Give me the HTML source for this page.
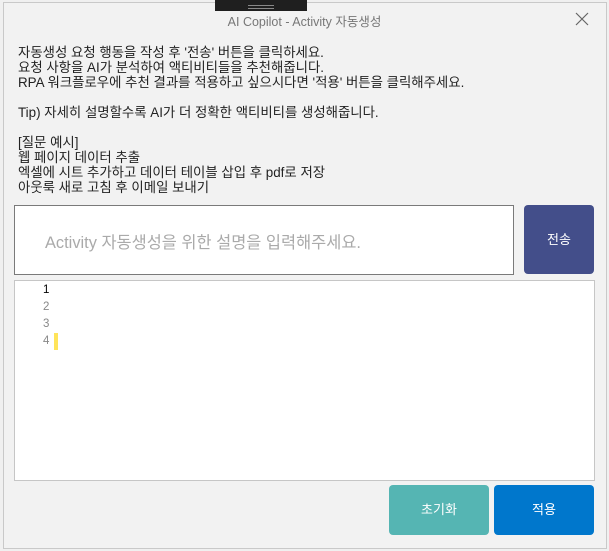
<!DOCTYPE html>
<html><head><meta charset="utf-8"><style>
body{margin:0;width:609px;height:551px;background:#f0f0f0;position:relative;overflow:hidden;font-family:"Liberation Sans","Noto Sans CJK KR",sans-serif;}
.win{position:absolute;left:3px;top:2px;width:602px;height:545px;border:1px solid #c9c9c9;background:#f2f2f2;}
.tab{position:absolute;left:215px;top:0;width:92px;height:11px;background:#1f1f1f;}
.tab i{position:absolute;left:33px;width:26px;height:1px;background:#888;}
.title{position:absolute;left:0;width:609px;top:11px;text-align:center;font-size:12.5px;color:#777;}
.close{position:absolute;left:574px;top:11px;}
.txt{position:absolute;left:18px;top:45px;font-size:13.4px;line-height:15px;color:#222;white-space:pre;}
.inp{position:absolute;left:14px;top:205px;width:498px;height:68px;border:1px solid #7a7a7a;background:#fff;}
.inp span{position:absolute;left:30px;top:23px;font-size:16.4px;color:#aaa;}
.send{position:absolute;left:524px;top:205px;width:70px;height:69px;background:#434e8a;border-radius:4px;color:#fff;font-size:13px;text-align:center;line-height:69px;}
.code{position:absolute;left:14px;top:280px;width:579px;height:199px;border:1px solid #c6c6c6;background:#fff;}
.ln{position:absolute;left:28px;font-size:11.5px;color:#888;}
.cur{position:absolute;left:39px;top:52px;width:4px;height:17px;background:#ffe45a;}
.btn{position:absolute;top:485px;width:100px;height:50px;border-radius:4px;color:#fff;font-size:13px;text-align:center;line-height:50px;}
</style></head><body>
<div class="win"></div>
<div class="tab"><i style="top:5px"></i><i style="top:8px"></i></div>
<div class="title">AI Copilot - Activity 자동생성</div>
<svg class="close" width="16" height="16" viewBox="0 0 16 16"><path d="M2 2L14 14M14 2L2 14" stroke="#666" stroke-width="1.2"/></svg>
<div class="txt">자동생성 요청 행동을 작성 후 '전송' 버튼을 클릭하세요.
요청 사항을 AI가 분석하여 액티비티들을 추천해줍니다.
RPA 워크플로우에 추천 결과를 적용하고 싶으시다면 '적용' 버튼을 클릭해주세요.

Tip) 자세히 설명할수록 AI가 더 정확한 액티비티를 생성해줍니다.

[질문 예시]
웹 페이지 데이터 추출
엑셀에 시트 추가하고 데이터 테이블 삽입 후 pdf로 저장
아웃룩 새로 고침 후 이메일 보내기</div>
<div class="inp"><span>Activity 자동생성을 위한 설명을 입력해주세요.</span></div>
<div class="send">전송</div>
<div class="code">
<div class="ln" style="top:3px;color:#000">1</div>
<div class="ln" style="top:20px">2</div>
<div class="ln" style="top:37px">3</div>
<div class="ln" style="top:54px">4</div>
<div class="cur"></div>
</div>
<div class="btn" style="left:389px;background:#55b5b3">초기화</div>
<div class="btn" style="left:494px;background:#0077cc">적용</div>
</body></html>
